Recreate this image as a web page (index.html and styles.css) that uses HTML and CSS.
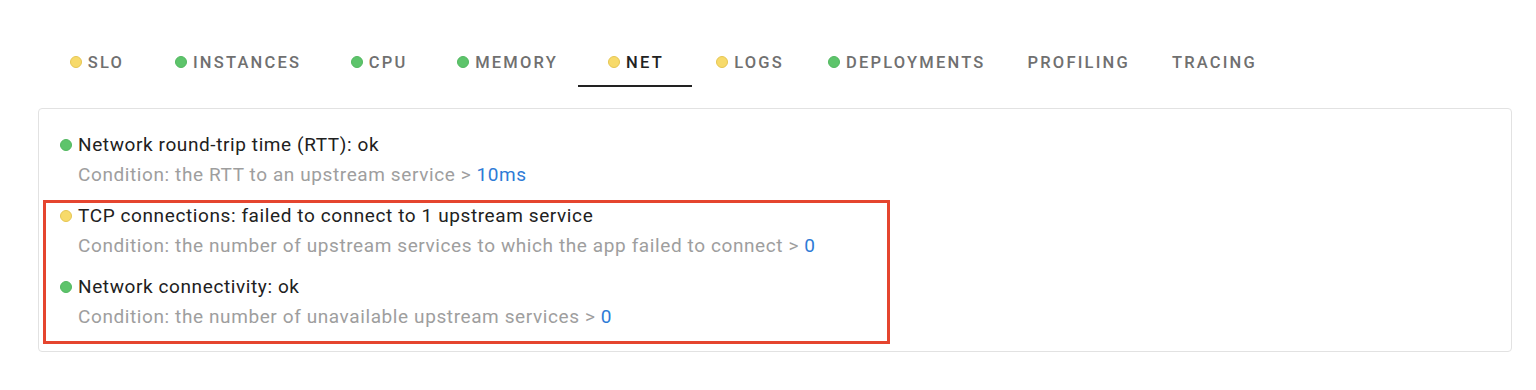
FILE: index.html
```html
<!DOCTYPE html>
<html lang="en" dir="ltr">

<head>
    <meta charset="utf-8">
    <title>Checks - NET</title>
    <link rel="stylesheet" href="styles.css">
</head>

<body>
    <div id="page">
        <div class="tabs">
            <div class="tab"><span class="dot warn"></span>SLO</div>
            <div class="tab"><span class="dot ok"></span>Instances</div>
            <div class="tab"><span class="dot ok"></span>CPU</div>
            <div class="tab"><span class="dot ok"></span>Memory</div>
            <div class="tab active"><span class="dot warn"></span>Net</div>
            <div class="tab"><span class="dot warn"></span>Logs</div>
            <div class="tab"><span class="dot ok"></span>Deployments</div>
            <div class="tab">Profiling</div>
            <div class="tab">Tracing</div>
        </div>

        <div class="card">
            <div class="check">
                <div class="title"><span class="dot ok"></span>Network round-trip time (RTT): ok</div>
                <div class="condition">Condition: the RTT to an upstream service &gt; <span class="value">10ms</span></div>
            </div>

            <div class="flagged">
                <div class="check">
                    <div class="title"><span class="dot warn"></span>TCP connections: failed to connect to 1 upstream service</div>
                    <div class="condition">Condition: the number of upstream services to which the app failed to connect &gt; <span class="value">0</span></div>
                </div>
                <div class="check">
                    <div class="title"><span class="dot ok"></span>Network connectivity: ok</div>
                    <div class="condition">Condition: the number of unavailable upstream services &gt; <span class="value">0</span></div>
                </div>
            </div>
        </div>
    </div>
</body>

</html>
```

FILE: styles.css
```css
body {
    margin: 0;
    background-color: #ffffff;
    font-family: Roboto, "Helvetica Neue", Arial, sans-serif;
    color: #212121;
}

#page {
    padding: 39px 24px 0px 38px;
}

.tabs {
    display: flex;
    padding-left: 1px;
}

.tab {
    display: flex;
    align-items: center;
    justify-content: center;
    box-sizing: border-box;
    min-width: 114px;
    height: 48px;
    padding: 0px 20px 0px 22px;
    border-bottom: 2px solid transparent;

    font-size: 16.5px;
    font-weight: 500;
    letter-spacing: 2.2px;
    text-transform: uppercase;
    color: #707070;
}

.tab.active {
    color: #222222;
    border-bottom-color: #222222;
}

.dot {
    display: inline-block;
    box-sizing: border-box;
    width: 12px;
    height: 12px;
    border-radius: 50%;
    margin-right: 6px;
    flex-shrink: 0;
}

.dot.ok {
    background-color: #5dc46b;
    border: 1px solid #52b860;
}

.dot.warn {
    background-color: #f7da6a;
    border: 1px solid #e6c653;
}

.card {
    margin-top: 21px;
    border: 1px solid #e2e2e2;
    border-radius: 4px;
    padding: 21px 21px 8px 21px;
}

.check {
    margin-bottom: 11px;
}

.check:last-child {
    margin-bottom: 0px;
}

.title {
    display: flex;
    align-items: center;
    font-size: 19px;
    letter-spacing: 0.6px;
    line-height: 30px;
    color: #212121;
}

.condition {
    padding-left: 18px;
    font-size: 19px;
    letter-spacing: 0.6px;
    line-height: 30px;
    color: #9e9e9e;
}

.value {
    color: #2e7bd6;
}

/* highlighted block */
.flagged {
    width: 829px;
    margin-left: -16px;
    padding: 0px 0px 11px 16px;
    outline: 3px solid #e5452f;
    outline-offset: -2px;
}
```
